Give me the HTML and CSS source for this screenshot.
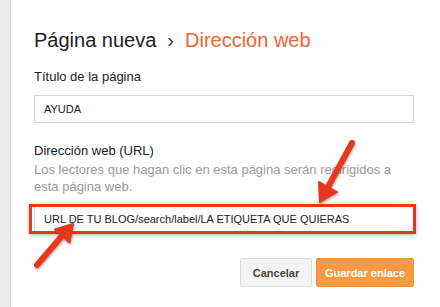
FILE: index.html
```html
<!DOCTYPE html>
<html lang="es">
<head>
<meta charset="utf-8">
<link rel="stylesheet" href="styles.css">
</head>
<body>
<div class="page">
  <div class="strip"></div>
  <div class="dialog">
    <h1 class="title">Página nueva<span class="sep">›</span><span class="accent">Dirección web</span></h1>
    <div class="label">Título de la página</div>
    <div class="input first">AYUDA</div>
    <div class="label second">Dirección web (URL)</div>
    <div class="desc">Los lectores que hagan clic en esta página serán redirigidos a esta página web.</div>
    <div class="input url">URL DE TU BLOG/search/label/LA ETIQUETA QUE QUIERAS</div>
    <div class="actions">
      <button class="btn cancel">Cancelar</button>
      <button class="btn save">Guardar enlace</button>
    </div>
  </div>
  <svg class="arrows" width="440" height="307" viewBox="0 0 440 307">
    <defs>
      <filter id="sh" x="-30%" y="-30%" width="160%" height="160%">
        <feDropShadow dx="0.5" dy="1.5" stdDeviation="1.2" flood-color="#000" flood-opacity="0.35"/>
      </filter>
    </defs>
    <g filter="url(#sh)" fill="#e8371f" stroke="#e8371f" stroke-linecap="round" stroke-linejoin="round">
      <line x1="352" y1="143" x2="328" y2="187" stroke-width="6"/>
      <polygon points="320,202 337,192 319,182" stroke-width="2"/>
      <line x1="37" y1="265" x2="62" y2="236" stroke-width="6"/>
      <polygon points="73,224 69.5,242.5 55,229.5" stroke-width="2"/>
    </g>
  </svg>
</div>
</body>
</html>
```
FILE: styles.css
```css
html, body {
  margin: 0;
  padding: 0;
  background: #fff;
}
.page {
  position: relative;
  display: flex;
  width: 440px;
  height: 307px;
  overflow: hidden;
  font-family: "Liberation Sans", Arial, sans-serif;
}
.strip {
  width: 10px;
  flex: none;
  background: #ececec;
  border-right: 1px solid #d4d4d4;
}
.dialog {
  flex: 1;
  display: flex;
  flex-direction: column;
  padding: 28px 26px 0 23px;
}
.title {
  margin: 0 0 17px;
  font-size: 20px;
  line-height: 24px;
  font-weight: normal;
  color: #222;
  white-space: nowrap;
}
.sep {
  margin: 0 11px 0 11px;
  color: #333;
}
.accent {
  color: #ef6434;
}
.label {
  font-size: 13px;
  line-height: 16px;
  color: #222;
}
.label.second {
  margin-top: 20px;
}
.input {
  margin-top: 10px;
  box-sizing: border-box;
  height: 28px;
  border: 1px solid #d3d3d3;
  padding: 0 9px;
  font-size: 11px;
  line-height: 26px;
  color: #222;
  background: #fff;
}
.desc {
  margin-top: 2px;
  max-width: 372px;
  font-size: 13px;
  line-height: 17px;
  color: #9a9a9a;
}
.url {
  position: relative;
  margin-top: 10px;
}
.url::after {
  content: "";
  position: absolute;
  left: -6px;
  right: -3px;
  top: -2px;
  bottom: -2px;
  border: 3px solid #e8371f;
  box-shadow: 0 1px 4px rgba(0, 0, 0, 0.3);
}
.actions {
  display: flex;
  justify-content: flex-end;
  gap: 4px;
  margin-top: 25px;
}
.btn {
  box-sizing: border-box;
  height: 29px;
  border-radius: 2px;
  font-family: "Liberation Sans", Arial, sans-serif;
  font-size: 11px;
  font-weight: bold;
  padding: 0;
}
.cancel {
  width: 72px;
  background: #f3f3f3;
  border: 1px solid #dcdcdc;
  color: #444;
}
.save {
  width: 98px;
  background: #f99a43;
  border: 1px solid #f5923a;
  color: #fff;
}
.arrows {
  position: absolute;
  left: 0;
  top: 0;
  pointer-events: none;
}
```
